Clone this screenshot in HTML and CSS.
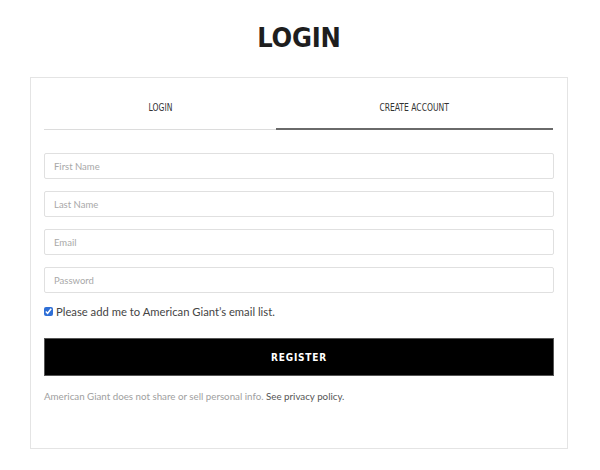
FILE: index.html
```html
<!DOCTYPE html>
<html lang="en">
<head>
<meta charset="utf-8">
<title>Login</title>
<link rel="stylesheet" href="styles.css">
</head>
<body>
  <h1 class="page-title">LOGIN</h1>
  <div class="card">
    <div class="tabs">
      <div class="tab tab-login"><span class="tab-label">LOGIN</span></div>
      <div class="tab tab-create active"><span class="tab-label">CREATE ACCOUNT</span></div>
    </div>
    <form class="form">
      <input class="field" type="text" placeholder="First Name">
      <input class="field" type="text" placeholder="Last Name">
      <input class="field" type="email" placeholder="Email">
      <input class="field" type="password" placeholder="Password">
      <label class="optin"><input class="check" type="checkbox" checked><span>Please add me to American Giant’s email list.</span></label>
      <button class="register" type="button">REGISTER</button>
      <p class="note">American Giant does not share or sell personal info. <a class="note-link" href="#">See privacy policy.</a></p>
    </form>
  </div>
</body>
</html>
```
FILE: styles.css
```css
html, body {
  margin: 0;
  padding: 0;
  background: #ffffff;
}
body {
  font-family: Lato, "Open Sans", sans-serif;
  color: #333;
}
.page-title {
  margin: 22px 0 0;
  height: 32px;
  line-height: 32px;
  text-align: center;
  font-family: "DejaVu Sans Condensed", "DejaVu Sans", sans-serif;
  font-weight: 700;
  font-size: 27px;
  color: #1e1e1e;
  letter-spacing: -0.2px;
  padding-right: 2px;
}
.card {
  box-sizing: border-box;
  width: 538px;
  height: 372px;
  margin: 23px 0 0 30px;
  border: 1px solid #e4e4e4;
  padding: 0 13px;
}
.tabs {
  display: flex;
  align-items: flex-end;
  height: 52px;
}
.tab {
  box-sizing: border-box;
  text-align: center;
  font-family: "DejaVu Sans Condensed", "DejaVu Sans", sans-serif;
  font-size: 11px;
  color: #333;
  line-height: 12px;
}
.tab-login {
  width: 232px;
  padding-bottom: 15px;
  border-bottom: 1px solid #dcdcdc;
}
.tab-create {
  width: 277px;
  padding-bottom: 14px;
  border-bottom: 2px solid #6a6a6a;
}
.tab-label {
  display: inline-block;
  transform: scaleX(0.77);
}
.form {
  display: flex;
  flex-direction: column;
  margin: 23px 0 0;
}
.field {
  box-sizing: border-box;
  height: 26px;
  margin: 0 0 12px;
  padding: 0 9px;
  border: 1px solid #e0e0e0;
  border-radius: 2px;
  font-family: Lato, sans-serif;
  font-size: 9.5px;
  color: #333;
  outline: none;
}
.field::placeholder {
  color: #a8a8a8;
}
.optin {
  display: flex;
  align-items: center;
  margin-top: -1px;
  height: 14px;
  font-size: 11.25px;
  color: #444;
}
.check {
  width: 9px;
  height: 9px;
  margin: 0 3px 0 0;
  accent-color: #2f6fd6;
}
.register {
  height: 38px;
  margin-top: 20px;
  border: 1px solid #555;
  background: #000;
  color: #fff;
  font-family: "DejaVu Sans Condensed", "DejaVu Sans", sans-serif;
  font-weight: 700;
  font-size: 10px;
  letter-spacing: 0.8px;
  cursor: pointer;
}
.note {
  margin: 14px 0 0;
  font-size: 9.75px;
  line-height: 12px;
  color: #a0a0a0;
}
.note-link {
  color: #555;
  text-decoration: none;
}
```
